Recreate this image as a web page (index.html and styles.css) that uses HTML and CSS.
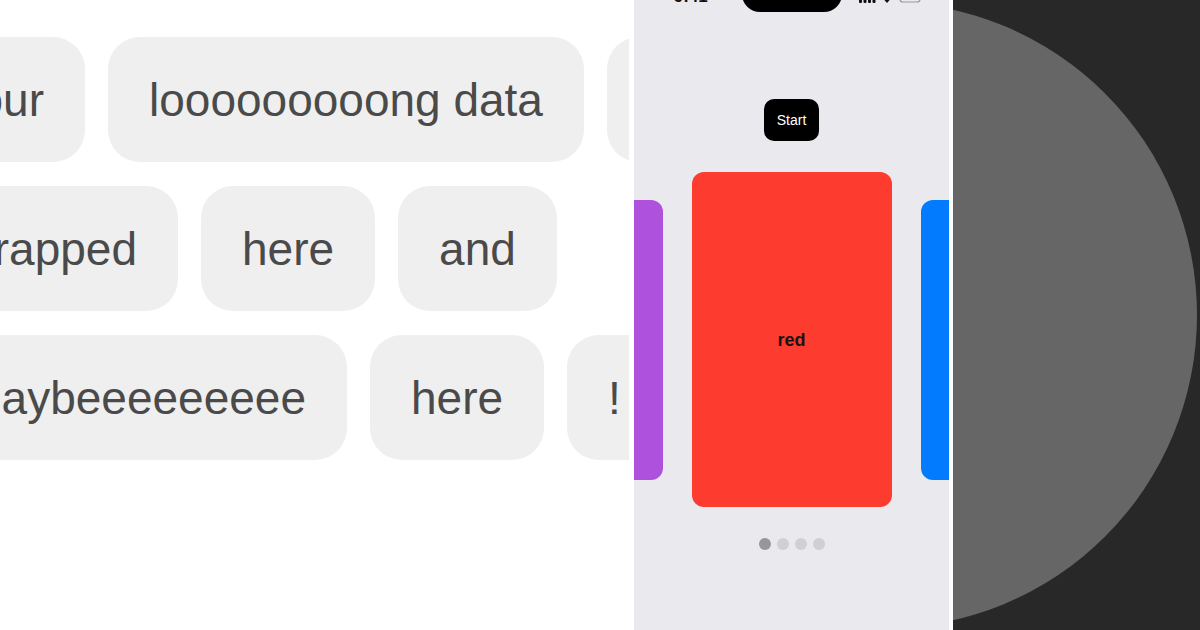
FILE: index.html
```html
<!DOCTYPE html>
<html>
<head>
<meta charset="utf-8">
<link rel="stylesheet" href="styles.css">
</head>
<body>
<div class="page">
  <section class="tags">
    <div class="row row-1">
      <span class="chip lead">your</span>
      <span class="chip">looooooooong data</span>
      <span class="chip">to</span>
    </div>
    <div class="row row-2">
      <span class="chip lead">wrapped</span>
      <span class="chip">here</span>
      <span class="chip">and</span>
    </div>
    <div class="row row-3">
      <span class="chip lead">maybeeeeeeeee</span>
      <span class="chip">here</span>
      <span class="chip">!</span>
    </div>
  </section>

  <section class="phone">
    <div class="status">
      <div class="time">9:41</div>
      <div class="island"></div>
      <div class="icons">
        <svg width="62" height="12" viewBox="0 0 62 12">
          <rect x="0" y="8" width="3" height="4" rx="1" fill="#111"/>
          <rect x="4.5" y="6" width="3" height="6" rx="1" fill="#111"/>
          <rect x="9" y="3" width="3" height="9" rx="1" fill="#111"/>
          <rect x="13.5" y="0" width="3" height="12" rx="1" fill="#111"/>
          <path d="M21 4 Q28 -2 35 4 L28 12 Z" fill="#111"/>
          <rect x="41" y="0" width="20" height="11" rx="3" fill="none" stroke="#9a9a9e" stroke-width="1.2"/>
          <rect x="43" y="2" width="16" height="7" rx="1.5" fill="#9a9a9e"/>
        </svg>
      </div>
    </div>
    <button class="start">Start</button>
    <div class="carousel">
      <div class="card side purple"></div>
      <div class="card main red"><span>red</span></div>
      <div class="card side blue"></div>
    </div>
    <div class="dots">
      <span class="dot active"></span>
      <span class="dot"></span>
      <span class="dot"></span>
      <span class="dot"></span>
    </div>
  </section>

  <section class="dark">
    <div class="circle"></div>
  </section>
</div>
</body>
</html>
```

FILE: styles.css
```css
* { box-sizing: border-box; }
html, body {
  margin: 0;
  padding: 0;
  background: #ffffff;
}
.page {
  width: 1200px;
  height: 630px;
  display: flex;
  overflow: hidden;
  background: #ffffff;
}

/* left: tags */
.tags {
  width: 629px;
  margin-right: 5px;
  flex: none;
  overflow: hidden;
  padding-top: 37px;
  display: flex;
  flex-direction: column;
  gap: 24px;
}
.row {
  display: flex;
  gap: 23px;
  height: 125px;
}
.chip {
  flex: none;
  height: 125px;
  display: flex;
  align-items: center;
  padding: 0 41px;
  background: #efefef;
  border-radius: 32px;
  font-family: "Liberation Sans", Arial, sans-serif;
  font-size: 46px;
  color: #4a4a4a;
  white-space: nowrap;
}
.chip.lead {
  width: 400px;
  justify-content: flex-end;
}
.row-1 .lead { margin-left: -315px; }
.row-2 .lead { margin-left: -222px; }
.row-3 .lead { margin-left: -53px; }

/* middle: phone */
.phone {
  width: 315px;
  flex: none;
  background: #e9e9ee;
  display: flex;
  flex-direction: column;
  align-items: center;
  overflow: hidden;
  font-family: "Liberation Sans", Arial, sans-serif;
}
.status {
  width: 100%;
  height: 12px;
  display: grid;
  grid-template-columns: 1fr auto 1fr;
  align-items: start;
}
.time {
  justify-self: center;
  margin-left: 6px;
  margin-top: -12px;
  font-size: 17px;
  line-height: 17px;
  font-weight: bold;
  color: #111;
}
.island {
  width: 100px;
  height: 37px;
  margin-top: -25px;
  background: #000;
  border-radius: 18px;
}
.icons {
  justify-self: center;
  margin-left: -10px;
  margin-top: -9px;
  height: 12px;
}
.icons svg { display: block; }

.start {
  margin-top: 87px;
  width: 55px;
  height: 42px;
  border: none;
  border-radius: 10px;
  background: #000;
  color: #fff;
  font-family: "Liberation Sans", Arial, sans-serif;
  font-size: 14px;
  padding: 0;
}
.carousel {
  margin-top: 31px;
  width: 100%;
  height: 335px;
  display: flex;
  justify-content: center;
  align-items: center;
  gap: 29px;
}
.card {
  flex: none;
  border-radius: 12px;
}
.card.main {
  width: 200px;
  height: 335px;
  display: flex;
  align-items: center;
  justify-content: center;
}
.card.main span {
  font-size: 18px;
  font-weight: bold;
  color: #151515;
  margin-top: 1px;
}
.card.side {
  width: 167px;
  height: 280px;
}
.red { background: #fe3b2f; }
.purple { background: #ae51dd; }
.blue { background: #027bff; }

.dots {
  margin-top: 31px;
  display: flex;
  gap: 6px;
}
.dot {
  width: 12px;
  height: 12px;
  border-radius: 50%;
  background: #cfcfd4;
}
.dot.active { background: #96969b; }

/* right: dark */
.dark {
  flex: none;
  width: 247px;
  margin-left: 4px;
  background: #282828;
  overflow: hidden;
  display: flex;
  align-items: center;
}
.circle {
  flex: none;
  width: 626px;
  height: 626px;
  margin-left: -382px;
  border-radius: 50%;
  background: #666666;
}
```
